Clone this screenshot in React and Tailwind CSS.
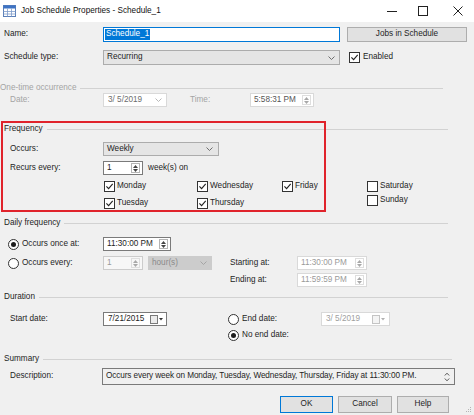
import React from "react";

const Check = ({ on = true }) => (
  <span className="w-[11px] h-[11px] border border-[#333] bg-white flex items-center justify-center shrink-0">
    {on && (
      <svg width="9" height="9" viewBox="0 0 9 9">
        <path d="M1.4 4.4 L3.6 6.7 L7.7 1.9" fill="none" stroke="#222" strokeWidth="1.1" />
      </svg>
    )}
  </span>
);

const Radio = ({ on }) => (
  <span className="w-[11px] h-[11px] rounded-full border border-[#333] bg-white flex items-center justify-center shrink-0">
    {on && <span className="w-[5px] h-[5px] rounded-full bg-[#1e1e1e]" />}
  </span>
);

const SpinArrows = ({ dim }) => (
  <span
    className={
      dim
        ? "w-[9px] h-[10px] border border-[#dedede] flex flex-col items-center justify-center gap-[1px]"
        : "w-[9px] h-[10px] border border-[#b4b4b4] flex flex-col items-center justify-center gap-[1px]"
    }
  >
    <svg width="5" height="3" viewBox="0 0 5 3">
      <path d="M0 3 L2.5 0 L5 3Z" fill={dim ? "#a8a8a8" : "#444"} />
    </svg>
    <svg width="5" height="3" viewBox="0 0 5 3">
      <path d="M0 0 L2.5 3 L5 0Z" fill={dim ? "#a8a8a8" : "#444"} />
    </svg>
  </span>
);

const Chevron = ({ color = "#606060" }) => (
  <svg width="7" height="4" viewBox="0 0 7 4">
    <path d="M0.5 0.5 L3.5 3.5 L6.5 0.5" fill="none" stroke={color} strokeWidth="0.9" />
  </svg>
);

const CalIcon = ({ dim }) => (
  <svg width="14" height="9" viewBox="0 0 14 9">
    <rect x="0.5" y="0.5" width="7" height="8" fill={dim ? "#f4f4f4" : "#ececec"} stroke={dim ? "#c4c4c4" : "#7a7a7a"} />
    <path d="M9 3 L13 3 L11 5.5Z" fill={dim ? "#b0b0b0" : "#333"} />
  </svg>
);

const GroupHeader = ({ title, dim, width = "w-[448px]", pad = "pl-[4px]" }) => (
  <div className={`flex items-center h-[10px] ${width} ${pad}`}>
    <span className={dim ? "text-[#a4a4a4]" : ""}>{title}</span>
    <span className="flex-1 h-px bg-[#d2d2d2] ml-[4px]" />
  </div>
);

const Day = ({ label, on = false }) => (
  <div className="h-[12px] flex items-center gap-[2px]">
    <Check on={on} />
    <span>{label}</span>
  </div>
);

export default function App() {
  return (
    <div className="relative w-[474px] h-[415px] overflow-hidden bg-[#f0f0f0] font-['Liberation_Sans',Arial,sans-serif] text-[8.2px] leading-none text-[#1e1e1e]">
      {/* title bar */}
      <div className="h-[22px] bg-white flex items-center">
        <svg className="ml-[3px]" width="13" height="12" viewBox="0 0 13 12">
          <rect x="0.5" y="0.5" width="12" height="11" fill="#fff" stroke="#5b7fb8" />
          <rect x="0.5" y="0.5" width="12" height="3" fill="#3d73c4" />
          <path d="M0.5 6.5 H12.5 M0.5 9 H12.5 M4.5 3.5 V11.5 M8.5 3.5 V11.5" stroke="#7d9ccb" strokeWidth="0.8" />
        </svg>
        <span className="ml-[5px] text-[#111]">Job Schedule Properties - Schedule_1</span>
        <div className="ml-auto flex items-center mr-[11px]">
          <svg width="10" height="10" viewBox="0 0 10 10">
            <path d="M0 5.5 H10" stroke="#222" strokeWidth="1" />
          </svg>
          <svg className="ml-[21px]" width="10" height="10" viewBox="0 0 10 10">
            <rect x="0.5" y="0.5" width="9" height="9" fill="none" stroke="#222" strokeWidth="1" />
          </svg>
          <svg className="ml-[25px]" width="10" height="10" viewBox="0 0 10 10">
            <path d="M0.5 0.5 L9.5 9.5 M9.5 0.5 L0.5 9.5" stroke="#222" strokeWidth="1" />
          </svg>
        </div>
      </div>

      <div className="flex flex-col">
        {/* name */}
        <div className="mt-[5px] flex items-center h-[15px]">
          <span className="pl-[4px] w-[103px]">Name:</span>
          <div className="w-[237px] h-[15px] border border-[#0078d7] bg-white flex items-center pl-[1px]">
            <span className="bg-[#0078d7] text-white px-[1px] h-[11px] flex items-center">Schedule_1</span>
          </div>
          <button className="ml-[7px] w-[120px] h-[15px] bg-[#e1e1e1] border border-[#adadad] flex items-center justify-center">
            Jobs in Schedule
          </button>
        </div>

        {/* schedule type */}
        <div className="mt-[8px] flex items-center h-[15px]">
          <span className="pl-[4px] w-[103px]">Schedule type:</span>
          <div className="w-[237px] h-[15px] border border-[#acacac] bg-[#e5e5e5] flex items-center justify-between pl-[3px] pr-[4px]">
            <span>Recurring</span>
            <Chevron />
          </div>
          <span className="ml-[9px]">
            <Check />
          </span>
          <span className="ml-[3px]">Enabled</span>
        </div>

        {/* one-time occurrence */}
        <div className="mt-[18px]">
          <GroupHeader title="One-time occurrence" dim width="w-[443px]" pad="pl-0" />
        </div>
        <div className="flex items-center h-[14px]">
          <span className="pl-[10px] w-[103px] text-[#a4a4a4]">Date:</span>
          <div className="w-[64px] h-[14px] border border-[#d9d9d9] bg-white flex items-center justify-between pl-[4px] pr-[4px] text-[#6d6d6d]">
            <span>3/ 5/2019</span>
            <Chevron color="#b0b0b0" />
          </div>
          <span className="ml-[23px] w-[60px] text-[#a4a4a4]">Time:</span>
          <div className="w-[64px] h-[14px] border border-[#d9d9d9] bg-white flex items-center justify-between pl-[3px] pr-[2px] text-[#555]">
            <span>5:58:31 PM</span>
            <SpinArrows dim />
          </div>
        </div>

        {/* frequency */}
        <div className="mt-[17px]">
          <GroupHeader title="Frequency" />
        </div>
        <div className="mt-[8px] flex items-center h-[14px]">
          <span className="pl-[10px] w-[103px]">Occurs:</span>
          <div className="w-[116px] h-[14px] border border-[#acacac] bg-[#e5e5e5] flex items-center justify-between pl-[3px] pr-[5px]">
            <span>Weekly</span>
            <Chevron />
          </div>
        </div>
        <div className="mt-[5px] flex items-center h-[14px]">
          <span className="pl-[10px] w-[103px]">Recurs every:</span>
          <div className="w-[40px] h-[14px] border border-[#7a7a7a] bg-white flex items-center justify-between pl-[3px] pr-[2px]">
            <span>1</span>
            <SpinArrows />
          </div>
          <span className="ml-[5px]">week(s) on</span>
        </div>
        <div className="mt-[5px] flex pl-[104px]">
          <div className="w-[93px] flex flex-col gap-[5px]">
            <Day label="Monday" on />
            <Day label="Tuesday" on />
          </div>
          <div className="w-[85px] flex flex-col gap-[5px]">
            <Day label="Wednesday" on />
            <Day label="Thursday" on />
          </div>
          <div className="w-[85px]">
            <Day label="Friday" on />
          </div>
          <div className="flex flex-col gap-[2px]">
            <Day label="Saturday" />
            <Day label="Sunday" />
          </div>
        </div>

        {/* daily frequency */}
        <div className="mt-[9px]">
          <GroupHeader title="Daily frequency" />
        </div>
        <div className="mt-[9px] flex items-center h-[14px]">
          <div className="w-[103px] pl-[8px] flex items-center gap-[3px]">
            <Radio on />
            <span>Occurs once at:</span>
          </div>
          <div className="w-[68px] h-[14px] border border-[#7a7a7a] bg-white flex items-center justify-between pl-[3px] pr-[2px]">
            <span>11:30:00 PM</span>
            <SpinArrows />
          </div>
        </div>
        <div className="mt-[5px] flex items-center h-[14px]">
          <div className="w-[103px] pl-[8px] flex items-center gap-[3px]">
            <Radio />
            <span>Occurs every:</span>
          </div>
          <div className="w-[40px] h-[14px] border border-[#cccccc] bg-[#f7f7f7] flex items-center justify-between pl-[3px] pr-[2px] text-[#9a9a9a]">
            <span>1</span>
            <SpinArrows dim />
          </div>
          <div className="ml-[5px] w-[64px] h-[14px] border border-[#cccccc] bg-[#cccccc] flex items-center justify-between pl-[3px] pr-[4px] text-[#8a8a8a]">
            <span>hour(s)</span>
            <Chevron color="#a0a0a0" />
          </div>
          <span className="ml-[18px] w-[67px]">Starting at:</span>
          <div className="w-[70px] h-[14px] border border-[#d9d9d9] bg-white flex items-center justify-between pl-[3px] pr-[2px] text-[#9a9a9a]">
            <span>11:30:00 PM</span>
            <SpinArrows dim />
          </div>
        </div>
        <div className="mt-[3px] flex items-center h-[14px] pl-[230px]">
          <span className="w-[67px]">Ending at:</span>
          <div className="w-[70px] h-[14px] border border-[#d9d9d9] bg-white flex items-center justify-between pl-[3px] pr-[2px] text-[#9a9a9a]">
            <span>11:59:59 PM</span>
            <SpinArrows dim />
          </div>
        </div>

        {/* duration */}
        <div className="mt-[5px]">
          <GroupHeader title="Duration" />
        </div>
        <div className="mt-[10px] flex items-center h-[14px]">
          <span className="pl-[10px] w-[103px]">Start date:</span>
          <div className="w-[64px] h-[14px] border border-[#7a7a7a] bg-white flex items-center justify-between pl-[4px] pr-[2px]">
            <span>7/21/2015</span>
            <CalIcon />
          </div>
          <div className="ml-[61px] flex items-center gap-[3px] w-[93px]">
            <Radio />
            <span>End date:</span>
          </div>
          <div className="w-[69px] h-[14px] border border-[#d9d9d9] bg-white flex items-center justify-between pl-[4px] pr-[3px] text-[#a0a0a0]">
            <span>3/ 5/2019</span>
            <CalIcon dim />
          </div>
        </div>
        <div className="mt-[3px] flex items-center h-[12px] pl-[228px] gap-[3px]">
          <Radio on />
          <span>No end date:</span>
        </div>

        {/* summary */}
        <div className="mt-[13px]">
          <GroupHeader title="Summary" width="w-[452px]" />
        </div>
        <div className="mt-[4px] flex items-center h-[17px]">
          <span className="pl-[10px] w-[102px]">Description:</span>
          <div className="w-[353px] h-[17px] border border-[#7a7a7a] bg-[#f0f0f0] flex items-center justify-between pl-[3px] pr-[4px]">
            <span className="tracking-[-0.1px]">Occurs every week on Monday, Tuesday, Wednesday, Thursday, Friday at 11:30:00 PM.</span>
            <svg width="6" height="10" viewBox="0 0 6 10">
              <path d="M0.8 3.5 L3 1.2 L5.2 3.5 M0.8 6.5 L3 8.8 L5.2 6.5" fill="none" stroke="#444" strokeWidth="0.9" />
            </svg>
          </div>
        </div>
        <div className="mt-[11px] flex items-center pl-[280px]">
          <button className="w-[53px] h-[17px] bg-[#e1e1e1] border border-[#0078d7] flex items-center justify-center">OK</button>
          <button className="ml-[5px] w-[54px] h-[17px] bg-[#e1e1e1] border border-[#adadad] flex items-center justify-center">Cancel</button>
          <button className="ml-[5px] w-[52px] h-[17px] bg-[#e1e1e1] border border-[#adadad] flex items-center justify-center">Help</button>
        </div>
      </div>

      {/* annotation box */}
      <div className="absolute left-[1px] top-[121px] w-[325px] h-[91px] border-2 border-[#e0232b] pointer-events-none" />
      {/* size grip */}
      <svg className="absolute right-[2px] bottom-[2px]" width="7" height="7" viewBox="0 0 7 7">
        <rect x="5" y="1" width="1" height="1" fill="#b5b5b5" />
        <rect x="3" y="3" width="1" height="1" fill="#b5b5b5" />
        <rect x="5" y="3" width="1" height="1" fill="#b5b5b5" />
        <rect x="1" y="5" width="1" height="1" fill="#b5b5b5" />
        <rect x="3" y="5" width="1" height="1" fill="#b5b5b5" />
        <rect x="5" y="5" width="1" height="1" fill="#b5b5b5" />
      </svg>
    </div>
  );
}
